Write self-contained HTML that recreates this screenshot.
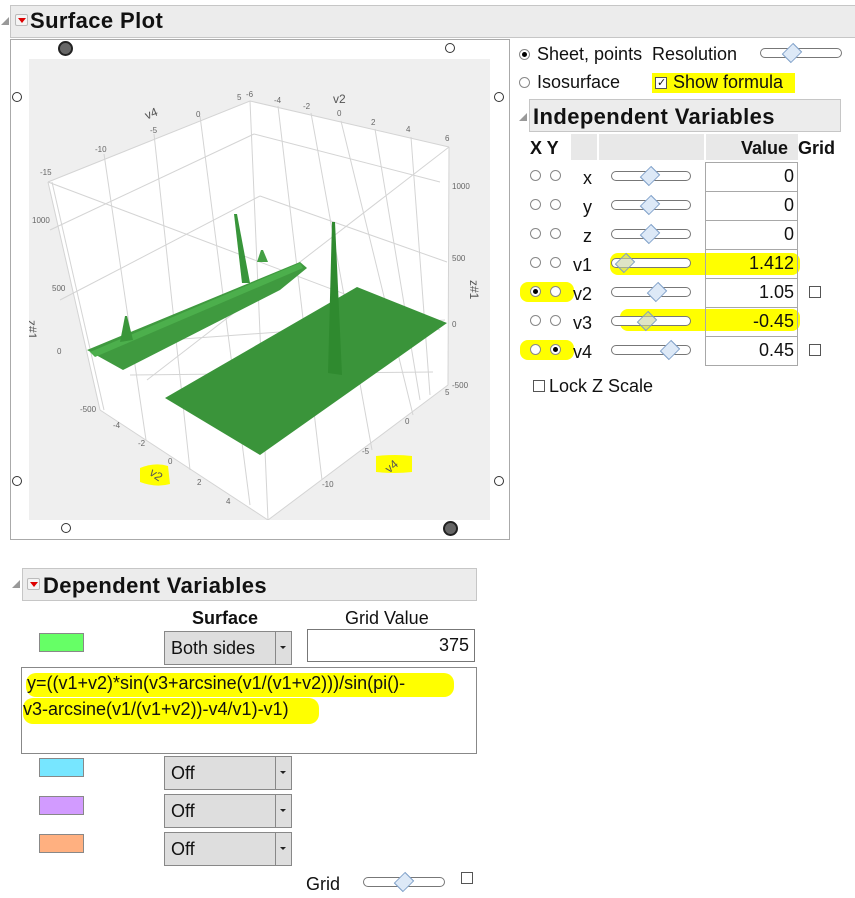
<!DOCTYPE html>
<html><head><meta charset="utf-8"><style>
*{margin:0;padding:0;box-sizing:border-box}
body{width:855px;height:898px;background:#fff;position:relative;overflow:hidden;font-family:"Liberation Sans",sans-serif;color:#111}
.a{position:absolute}
.hdr{position:absolute;background:#ececec;border:1px solid #c6c6c6}
.ht{position:absolute;font-weight:bold;font-size:22px;letter-spacing:0.4px;white-space:nowrap}
.tri{position:absolute;width:0;height:0;border-left:8px solid transparent;border-bottom:8px solid #999}
.red{position:absolute;width:13px;height:12px;border:1px solid #bbb;background:#f4f4f4;border-radius:2px}
.red:after{content:"";position:absolute;left:2px;top:3px;border-left:4px solid transparent;border-right:4px solid transparent;border-top:5px solid #d00}
.t{position:absolute;font-size:18px;white-space:nowrap}
.rad{position:absolute;width:11px;height:11px;border:1px solid #888;border-radius:50%;background:#fff}
.rad.on:after{content:"";position:absolute;left:2px;top:2px;width:5px;height:5px;border-radius:50%;background:#000}
.sl{position:absolute;height:10px;border:1px solid #777;border-radius:5px;background:#fff}
.dm{position:absolute;width:16px;height:16px;background:#dde9f7;border:1px solid #7a9cc6;transform:rotate(45deg) scaleX(.8)}
.cell{position:absolute;border:1px solid #a8a8a8;background:#fff;font-size:18px;text-align:right;padding-right:3px;line-height:27px}
.cb{position:absolute;width:12px;height:12px;border:1px solid #555;background:#fff}
.hl{position:absolute;background:#ffff00}
.dd{position:absolute;width:128px;height:34px;background:#dedede;border:1px solid #888;font-size:18px;line-height:32px;padding-left:6px}
.dd:after{content:"";position:absolute;right:0;top:0;width:15px;height:32px;border-left:1px solid #888}
.dd:before{content:"";position:absolute;right:5px;top:14px;border-left:3px solid transparent;border-right:3px solid transparent;border-top:3px solid #222;z-index:2}
.sw{position:absolute;width:45px;height:19px;border:1px solid #888}
.hc{position:absolute;width:10px;height:10px;border:1px solid #333;border-radius:50%;background:#fff}
.dc{position:absolute;width:15px;height:15px;border:2px solid #222;border-radius:50%;background:#666}
</style></head><body>

<div class="tri" style="left:1px;top:17px"></div>
<div class="hdr" style="left:10px;top:5px;width:850px;height:33px"></div>
<div class="red" style="left:15px;top:14px"></div>
<div class="ht" style="left:30px;top:8px">Surface Plot</div>

<div class="a" style="left:10px;top:39px;width:500px;height:501px;border:1px solid #aaa;background:#fff"></div>
<svg class="a" style="left:29px;top:59px" width="461" height="461" viewBox="29 59 461 461">
<rect x="29" y="59" width="461" height="461" fill="#efefef"/>
<polygon points="48,182 250,101 449,147 448,385 268,520 100,410" fill="#fff"/>
<g stroke="#d4d4d4" stroke-width="1" fill="none">
<polyline points="48,182 250,101 449,147"/>
<line x1="48" y1="182" x2="100" y2="410"/><line x1="52" y1="182" x2="104" y2="410"/>
<line x1="449" y1="147" x2="448" y2="385"/>
<line x1="250" y1="101" x2="268" y2="520"/>
<line x1="254" y1="134" x2="440" y2="182"/>
<line x1="254" y1="134" x2="50" y2="230"/>
<line x1="260" y1="196" x2="447" y2="262"/>
<line x1="260" y1="196" x2="60" y2="300"/>
<line x1="100" y1="410" x2="268" y2="520"/><line x1="268" y1="520" x2="448" y2="385"/>
<line x1="48" y1="182" x2="440" y2="330"/>
<line x1="449" y1="147" x2="147" y2="380"/>
<line x1="200" y1="116" x2="250" y2="505"/><line x1="154" y1="134" x2="190" y2="470"/>
<line x1="104" y1="154" x2="146" y2="440"/>
<line x1="278" y1="106" x2="322" y2="480"/><line x1="311" y1="113" x2="372" y2="450"/>
<line x1="341" y1="121" x2="413" y2="415"/><line x1="375" y1="129" x2="420" y2="400"/><line x1="411" y1="137" x2="430" y2="395"/>
<line x1="130" y1="375" x2="433" y2="372"/><line x1="100" y1="345" x2="445" y2="320"/>
</g>
<polygon points="87,350 300,262 307,268 280,290 123,370" fill="#3f9a3f"/>
<polygon points="90,352 300,263 303,268 95,357" fill="#4caf4c"/>
<polygon points="165,398 357,287 447,323 260,455" fill="#3a943a"/>
<polygon points="332,222 335,222 342,375 328,373" fill="#2f8a2f"/>
<polygon points="234,214 237,214 250,283 242,283" fill="#38953a"/>
<polygon points="125,316 127,316 133,340 120,342" fill="#3a963a"/>
<polygon points="261,250 263,250 268,262 257,262" fill="#44a044"/>
<g font-size="8" fill="#666" font-family="Liberation Sans">
<text x="40" y="175">-15</text><text x="95" y="152">-10</text><text x="150" y="133">-5</text><text x="196" y="117">0</text><text x="237" y="100">5</text><text x="246" y="97">-6</text><text x="274" y="103">-4</text><text x="303" y="109">-2</text><text x="337" y="116">0</text><text x="371" y="125">2</text><text x="406" y="132">4</text><text x="445" y="141">6</text>
<text x="32" y="223">1000</text><text x="452" y="189">1000</text><text x="52" y="291">500</text><text x="452" y="261">500</text><text x="57" y="354">0</text><text x="452" y="327">0</text><text x="80" y="412">-500</text><text x="452" y="388">-500</text>
<text x="113" y="428">-4</text><text x="138" y="446">-2</text><text x="168" y="464">0</text><text x="197" y="485">2</text><text x="226" y="504">4</text>
<text x="445" y="395">5</text><text x="405" y="424">0</text><text x="362" y="454">-5</text><text x="322" y="487">-10</text>
</g>
<g font-size="12" fill="#555" font-family="Liberation Sans">
<text x="145" y="118" transform="rotate(-22 150 114)">v4</text><text x="333" y="103">v2</text>
<text x="38" y="330" transform="rotate(90 38 320)">z#1</text><text x="478" y="288" transform="rotate(90 478 280)">z#1</text>
</g>
<path d="M140,468 q15,-6 28,-2 l2,18 q-14,4 -30,-2z" fill="#ffff00"/>
<path d="M376,456 q20,-2 36,0 l0,16 q-18,2 -36,0z" fill="#ffff00"/>
<text x="150" y="478" font-size="12" fill="#555" transform="rotate(35 155 474)">v2</text>
<text x="384" y="471" font-size="12" fill="#555" transform="rotate(-40 390 465)">v4</text>
</svg>
<div class="dc" style="left:58px;top:41px"></div>
<div class="dc" style="left:443px;top:521px"></div>
<div class="hc" style="left:445px;top:43px"></div>
<div class="hc" style="left:12px;top:92px"></div>
<div class="hc" style="left:494px;top:92px"></div>
<div class="hc" style="left:12px;top:476px"></div>
<div class="hc" style="left:494px;top:476px"></div>
<div class="hc" style="left:61px;top:523px"></div>

<div class="rad on" style="left:519px;top:49px"></div>
<div class="t" style="left:537px;top:44px">Sheet, points</div>
<div class="t" style="left:652px;top:44px">Resolution</div>
<div class="sl" style="left:760px;top:48px;width:82px"></div>
<div class="dm" style="left:784px;top:45px"></div>
<div class="rad" style="left:519px;top:77px"></div>
<div class="t" style="left:537px;top:72px">Isosurface</div>
<div class="hl" style="left:652px;top:73px;width:143px;height:20px"></div>
<div class="cb" style="left:655px;top:77px"></div><div class="a" style="left:657px;top:76px;font-size:11px">✓</div>
<div class="t" style="left:673px;top:72px">Show formula</div>

<div class="tri" style="left:519px;top:113px"></div>
<div class="hdr" style="left:529px;top:99px;width:312px;height:33px"></div>
<div class="ht" style="left:533px;top:104px">Independent Variables</div>
<div class="t" style="left:530px;top:138px;font-weight:bold">X Y</div>
<div class="a" style="left:571px;top:134px;width:26px;height:26px;background:#e8e8e8"></div>
<div class="a" style="left:599px;top:134px;width:105px;height:26px;background:#e8e8e8"></div>
<div class="a" style="left:706px;top:134px;width:92px;height:26px;background:#e8e8e8"></div>
<div class="t" style="left:741px;top:138px;font-weight:bold">Value</div>
<div class="t" style="left:798px;top:138px;font-weight:bold">Grid</div>

<div class="hl" style="left:610px;top:253px;width:190px;height:22px;border-radius:8px"></div>
<div class="hl" style="left:620px;top:309px;width:180px;height:22px;border-radius:8px"></div>
<div class="hl" style="left:520px;top:282px;width:54px;height:20px;border-radius:8px"></div>
<div class="hl" style="left:520px;top:340px;width:54px;height:20px;border-radius:8px"></div>

<div class="rad" style="left:530px;top:170px"></div><div class="rad" style="left:550px;top:170px"></div><div class="t" style="left:583px;top:168px">x</div><div class="sl" style="left:611px;top:171px;width:80px"></div><div class="dm" style="left:642px;top:168px"></div><div class="cell" style="left:705px;top:162px;width:93px;height:30px">0</div>
<div class="rad" style="left:530px;top:199px"></div><div class="rad" style="left:550px;top:199px"></div><div class="t" style="left:583px;top:197px">y</div><div class="sl" style="left:611px;top:200px;width:80px"></div><div class="dm" style="left:642px;top:197px"></div><div class="cell" style="left:705px;top:191px;width:93px;height:30px">0</div>
<div class="rad" style="left:530px;top:228px"></div><div class="rad" style="left:550px;top:228px"></div><div class="t" style="left:583px;top:226px">z</div><div class="sl" style="left:611px;top:229px;width:80px"></div><div class="dm" style="left:642px;top:226px"></div><div class="cell" style="left:705px;top:220px;width:93px;height:30px">0</div>
<div class="rad" style="left:530px;top:257px"></div><div class="rad" style="left:550px;top:257px"></div><div class="t" style="left:573px;top:255px">v1</div><div class="sl" style="left:611px;top:258px;width:80px"></div><div class="dm" style="left:617px;top:255px;background:rgba(200,210,160,.6)"></div><div class="cell" style="left:705px;top:249px;width:93px;height:30px;background:transparent">1.412</div>
<div class="rad on" style="left:530px;top:286px"></div><div class="rad" style="left:550px;top:286px"></div><div class="t" style="left:573px;top:284px">v2</div><div class="sl" style="left:611px;top:287px;width:80px"></div><div class="dm" style="left:649px;top:284px"></div><div class="cell" style="left:705px;top:278px;width:93px;height:30px">1.05</div><div class="cb" style="left:809px;top:286px"></div>
<div class="rad" style="left:530px;top:315px"></div><div class="rad" style="left:550px;top:315px"></div><div class="t" style="left:573px;top:313px">v3</div><div class="sl" style="left:611px;top:316px;width:80px"></div><div class="dm" style="left:639px;top:313px;background:rgba(200,210,160,.6)"></div><div class="cell" style="left:705px;top:307px;width:93px;height:30px;background:transparent">-0.45</div>
<div class="rad" style="left:530px;top:344px"></div><div class="rad on" style="left:550px;top:344px"></div><div class="t" style="left:573px;top:342px">v4</div><div class="sl" style="left:611px;top:345px;width:80px"></div><div class="dm" style="left:662px;top:342px"></div><div class="cell" style="left:705px;top:336px;width:93px;height:30px">0.45</div><div class="cb" style="left:809px;top:344px"></div>
<div class="cb" style="left:533px;top:380px"></div>
<div class="t" style="left:549px;top:376px">Lock Z Scale</div>

<div class="tri" style="left:12px;top:580px"></div>
<div class="hdr" style="left:22px;top:568px;width:455px;height:33px"></div>
<div class="red" style="left:27px;top:578px"></div>
<div class="ht" style="left:43px;top:573px">Dependent Variables</div>
<div class="t" style="left:192px;top:608px;font-weight:bold">Surface</div>
<div class="t" style="left:345px;top:608px">Grid Value</div>
<div class="sw" style="left:39px;top:633px;background:#66ff66"></div>
<div class="dd" style="left:164px;top:631px">Both sides</div>
<div class="a" style="left:307px;top:629px;width:168px;height:33px;border:1px solid #777;font-size:18px;text-align:right;padding-right:5px;line-height:31px">375</div>
<div class="a" style="left:21px;top:667px;width:456px;height:87px;border:1px solid #888"></div>
<div class="hl" style="left:26px;top:673px;width:428px;height:24px;border-radius:10px"></div>
<div class="hl" style="left:23px;top:698px;width:296px;height:26px;border-radius:10px"></div>
<div class="t" style="left:27px;top:673px">y=((v1+v2)*sin(v3+arcsine(v1/(v1+v2)))/sin(pi()-</div>
<div class="t" style="left:23px;top:699px">v3-arcsine(v1/(v1+v2))-v4/v1)-v1)</div>
<div class="sw" style="left:39px;top:758px;background:#77e6ff"></div>
<div class="dd" style="left:164px;top:756px">Off</div>
<div class="sw" style="left:39px;top:796px;background:#d29bff"></div>
<div class="dd" style="left:164px;top:794px">Off</div>
<div class="sw" style="left:39px;top:834px;background:#ffb080"></div>
<div class="dd" style="left:164px;top:832px">Off</div>
<div class="t" style="left:306px;top:874px">Grid</div>
<div class="sl" style="left:363px;top:877px;width:82px"></div>
<div class="dm" style="left:396px;top:874px"></div>
<div class="cb" style="left:461px;top:872px"></div>
</body></html>
